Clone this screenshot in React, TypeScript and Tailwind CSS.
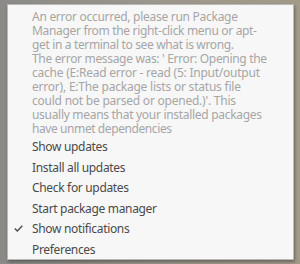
import React, { useLayoutEffect, useRef, useState } from "react";

const lines: [string, number][] = [
  ["An error occurred, please run Package", 206],
  ["Manager from the right-click menu or apt-", 225],
  ["get in a terminal to see what is wrong.", 202],
  ["The error message was: ' Error: Opening the", 235],
  ["cache (E:Read error - read (5: Input/output", 228],
  ["error), E:The package lists or status file", 209],
  ["could not be parsed or opened.)'. This", 204],
  ["usually means that your installed packages", 230],
  ["have unmet dependencies", 140],
];

function FitLine({ text, width }: { text: string; width: number }) {
  const ref = useRef<HTMLSpanElement>(null);
  const [ls, setLs] = useState(0);
  useLayoutEffect(() => {
    if (!ref.current) return;
    const w = ref.current.getBoundingClientRect().width;
    setLs((width - w) / Math.max(1, text.length - 1));
  }, [text, width]);
  return (
    <div className="h-[14px] flex items-center">
      <span ref={ref} className="inline-block leading-[13px] whitespace-nowrap" style={{ letterSpacing: ls }}>
        {text}
      </span>
    </div>
  );
}

const items = ["Show updates", "Install all updates", "Check for updates", "Start package manager"];

export default function App() {
  const probe = useRef<HTMLSpanElement>(null);
  const [ils, setIls] = useState(0);
  useLayoutEffect(() => {
    if (!probe.current) return;
    const w = probe.current.getBoundingClientRect().width;
    setIls((125 - w) / 20);
  }, []);
  const font = { fontFamily: '"Noto Sans", "Open Sans", sans-serif' };
  const itemStyle = { letterSpacing: ils };
  return (
    <div
      className="w-[300px] h-[264px] overflow-hidden bg-gradient-to-r from-[#8b8a86] via-[#9c978d] to-[#a39b88] pt-[4px] pl-[7px]"
      style={font}
    >
      <div className="w-[287px] h-[256px] bg-[#f7f7f7] border border-[#b8b8b8] shadow-[1px_2px_3px_rgba(0,0,0,0.35)] flex flex-col relative">
        <div className="pl-[24px] pt-[4px] text-[12px] text-[#a6a6a6]">
          {lines.map(([l, w]) => (
            <FitLine key={l} text={l} width={w} />
          ))}
        </div>
        <div className="mt-[1px] h-px bg-[#dcdcdc]" />
        <div className="flex flex-col pt-[1px] text-[12px] text-[#4a4a4a]">
          {items.map((t) => (
            <div key={t} className="h-[20.5px] flex items-center pl-[24px]">
              <span className="whitespace-nowrap" style={itemStyle}>{t}</span>
            </div>
          ))}
        </div>
        <div className="h-px bg-[#dcdcdc]" />
        <div className="flex flex-col text-[12px] text-[#4a4a4a]">
          <div className="h-[20.5px] flex items-center relative pl-[24px]">
            <svg className="absolute left-[6px] top-[6px]" width="9" height="7" viewBox="0 0 9 7">
              <path d="M0.8 3.6 L3.3 6 L8.3 0.8" fill="none" stroke="#4a4a4a" strokeWidth="1.4" />
            </svg>
            <span className="whitespace-nowrap" style={itemStyle}>Show notifications</span>
          </div>
          <div className="h-[20.5px] flex items-center pl-[24px]">
            <span className="whitespace-nowrap" style={itemStyle}>Preferences</span>
          </div>
        </div>
        <span ref={probe} className="absolute invisible whitespace-nowrap text-[12px]">Start package manager</span>
      </div>
    </div>
  );
}
